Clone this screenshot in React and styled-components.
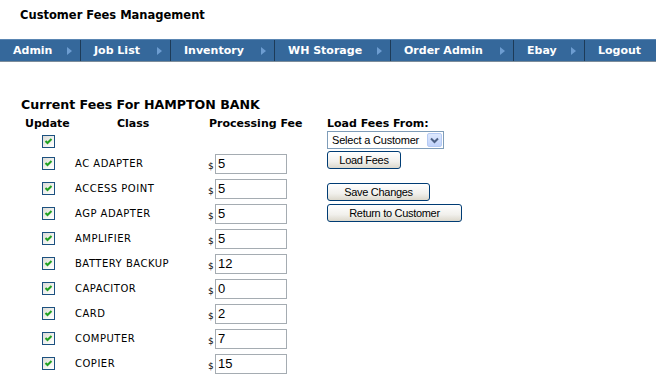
import React from "react";
import styled, { createGlobalStyle } from "styled-components";

const Global = createGlobalStyle`
  html, body { margin: 0; padding: 0; background: #fff; }
  body { font-family: "DejaVu Sans", Verdana, sans-serif; color: #000; }
`;

const Page = styled.div`
  width: 663px;
  height: 377px;
  overflow: hidden;
`;

const Title = styled.h1`
  margin: 0;
  padding: 8px 0 0 20px;
  height: 31px;
  box-sizing: border-box;
  font-size: 11.5px;
  line-height: 15px;
  font-weight: bold;
`;

const NavBar = styled.nav`
  display: flex;
  width: 656px;
  height: 23px;
  box-sizing: border-box;
  margin-top: 8px;
  background: #35689b;
  border-top: 1px solid #5a86b3;
  border-bottom: 1px solid #7c8c9a;
`;

const NavItem = styled.div`
  display: flex;
  align-items: center;
  box-sizing: border-box;
  width: ${(p) => p.$w}px;
  padding-left: 13px;
  color: #fff;
  font-size: 11px;
  font-weight: bold;
  border-right: ${(p) => (p.$last ? "none" : "1px solid #1d3b58")};
`;

const NavLabel = styled.span`
  flex: 1;
  white-space: nowrap;
`;

const Arrow = styled.span`
  width: 0;
  height: 0;
  margin-right: 8px;
  border-top: 4px solid transparent;
  border-bottom: 4px solid transparent;
  border-left: 5px solid #6d9dd1;
`;

const Content = styled.div`
  padding: 0 0 0 21px;
`;

const Heading = styled.h2`
  margin: 36px 0 0 0;
  font-size: 12.6px;
  line-height: 14px;
  font-weight: bold;
`;

const Columns = styled.div`
  display: flex;
  align-items: flex-start;
  margin-top: 4px;
`;

const FeeGrid = styled.div`
  display: grid;
  grid-template-columns: 54px 133px 100px;
  grid-auto-rows: 25px;
  grid-template-rows: 15px 20px;
  align-items: center;
`;

const HeadCell = styled.div`
  font-size: 11px;
  font-weight: bold;
  line-height: 15px;
  padding-left: ${(p) => p.$pl || 0}px;
  white-space: nowrap;
`;

const CheckCell = styled.div`
  display: flex;
  justify-content: center;
`;

const ClassCell = styled.div`
  font-size: 10px;
  letter-spacing: 0.5px;
  white-space: nowrap;
`;

const FeeCell = styled.div`
  display: flex;
  align-items: flex-end;
`;

const Dollar = styled.span`
  font-size: 9px;
  width: 7px;
  line-height: 12px;
  padding-bottom: 2px;
`;

const FeeInput = styled.div`
  width: 72px;
  height: 20px;
  box-sizing: border-box;
  border: 1px solid #a5acb2;
  font-family: "Liberation Sans", Arial, sans-serif;
  font-size: 13px;
  line-height: 18px;
  padding-left: 2px;
`;

const Box = styled.span`
  display: inline-flex;
  align-items: center;
  justify-content: center;
  width: 13px;
  height: 13px;
  box-sizing: border-box;
  border: 1px solid #1c5180;
  background: linear-gradient(135deg, #dcdcd7 0%, #fbfbf9 80%, #ffffff 100%);
`;

const Side = styled.div`
  margin-left: 19px;
  display: flex;
  flex-direction: column;
  align-items: flex-start;
`;

const SideLabel = styled.div`
  font-size: 11px;
  font-weight: bold;
  line-height: 15px;
`;

const Select = styled.div`
  display: flex;
  width: 117px;
  height: 18px;
  box-sizing: border-box;
  border: 1px solid #7f9db9;
  font-family: "Liberation Sans", Arial, sans-serif;
  font-size: 11px;
  letter-spacing: -0.2px;
  line-height: 16px;
`;

const SelectText = styled.span`
  flex: 1;
  padding-left: 4px;
  white-space: nowrap;
  overflow: hidden;
`;

const SelectBtn = styled.span`
  width: 15px;
  margin: 1px;
  box-sizing: border-box;
  border: 1px solid #b6cbf4;
  border-radius: 2px;
  background: linear-gradient(#dde8fd, #c1d3fb);
  display: flex;
  align-items: center;
  justify-content: center;
`;

const Button = styled.div`
  width: ${(p) => p.$w}px;
  height: 18px;
  box-sizing: border-box;
  margin-top: ${(p) => p.$mt || 0}px;
  border: 1px solid #003c74;
  border-radius: 3px;
  background: linear-gradient(#ffffff 0%, #f1f0ec 60%, #dcd8cc 100%);
  font-family: "Liberation Sans", Arial, sans-serif;
  font-size: 11px;
  letter-spacing: -0.3px;
  line-height: 16px;
  text-align: center;
  white-space: nowrap;
`;

const Check = () => (
  <Box>
    <svg width="9" height="9" viewBox="0 0 9 9">
      <path d="M1.5 4 L3.5 6 L7.5 2" fill="none" stroke="#21a121" strokeWidth="2" />
    </svg>
  </Box>
);

const nav = [
  ["Admin", 81],
  ["Job List", 90],
  ["Inventory", 104],
  ["WH Storage", 116],
  ["Order Admin", 123],
  ["Ebay", 71],
  ["Logout", 71],
];

const fees = [
  ["AC ADAPTER", "5"],
  ["ACCESS POINT", "5"],
  ["AGP ADAPTER", "5"],
  ["AMPLIFIER", "5"],
  ["BATTERY BACKUP", "12"],
  ["CAPACITOR", "0"],
  ["CARD", "2"],
  ["COMPUTER", "7"],
  ["COPIER", "15"],
];

export default function App() {
  return (
    <Page>
      <Global />
      <Title>Customer Fees Management</Title>
      <NavBar>
        {nav.map(([label, w], i) => {
          const last = i === nav.length - 1;
          return (
            <NavItem key={label} $w={w} $last={last}>
              <NavLabel>{label}</NavLabel>
              {!last && <Arrow />}
            </NavItem>
          );
        })}
      </NavBar>
      <Content>
        <Heading>Current Fees For HAMPTON BANK</Heading>
        <Columns>
          <FeeGrid>
            <HeadCell $pl={4}>Update</HeadCell>
            <HeadCell $pl={42}>Class</HeadCell>
            <HeadCell $pl={1}>Processing Fee</HeadCell>
            <CheckCell><Check /></CheckCell>
            <div />
            <div />
            {fees.map(([name, val]) => (
              <React.Fragment key={name}>
                <CheckCell><Check /></CheckCell>
                <ClassCell>{name}</ClassCell>
                <FeeCell>
                  <Dollar>$</Dollar>
                  <FeeInput>{val}</FeeInput>
                </FeeCell>
              </React.Fragment>
            ))}
          </FeeGrid>
          <Side>
            <SideLabel>Load Fees From:</SideLabel>
            <Select>
              <SelectText>Select a Customer</SelectText>
              <SelectBtn>
                <svg width="9" height="7" viewBox="0 0 9 7">
                  <path d="M1 1.5 L4.5 5 L8 1.5" fill="none" stroke="#4d6185" strokeWidth="2" />
                </svg>
              </SelectBtn>
            </Select>
            <Button $w={74} $mt={2}>Load Fees</Button>
            <Button $w={103} $mt={14}>Save Changes</Button>
            <Button $w={135} $mt={3}>Return to Customer</Button>
          </Side>
        </Columns>
      </Content>
    </Page>
  );
}
